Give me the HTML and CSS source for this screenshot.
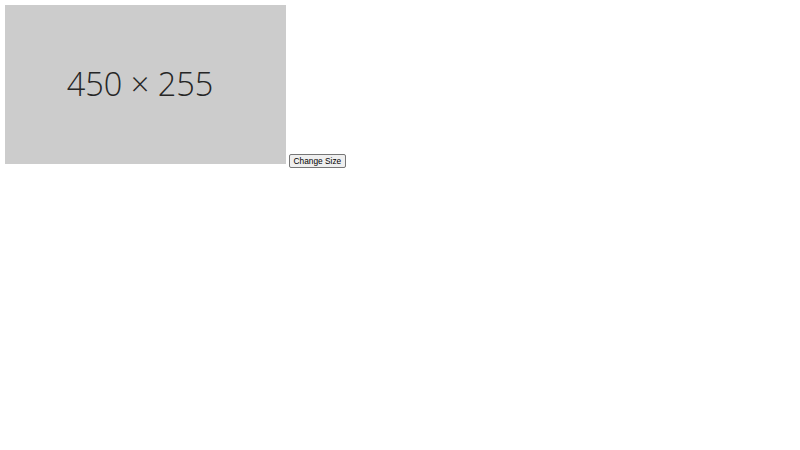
FILE: index.html
```html
<!DOCTYPE html>
<html>
<head>
<meta charset="utf-8">
<link rel="stylesheet" href="styles.css">
</head>
<body>
<div class="placeholder"><span class="label">450 × 255</span></div> <button class="btn">Change Size</button>
</body>
</html>
```

FILE: styles.css
```css
body {
  margin: 5px;
  font-family: "Liberation Serif", serif;
  font-size: 10px;
}
.placeholder {
  display: inline-block;
  overflow: hidden;
  width: 281px;
  height: 159px;
  background: #cccccc;
  text-align: center;
  line-height: 157px;
  box-sizing: border-box;
  padding-right: 11px;
}
.label {
  font-family: "Open Sans", sans-serif;
  font-weight: 300;
  font-size: 32.5px;
  color: #262626;
}
.btn {
  font-family: "Liberation Sans", Arial, sans-serif;
  font-size: 8.333px;
  padding: 1px 4px;
  border: 1px solid #767676;
  border-radius: 2px;
  background: #efefef;
  color: #000000;
}
```
